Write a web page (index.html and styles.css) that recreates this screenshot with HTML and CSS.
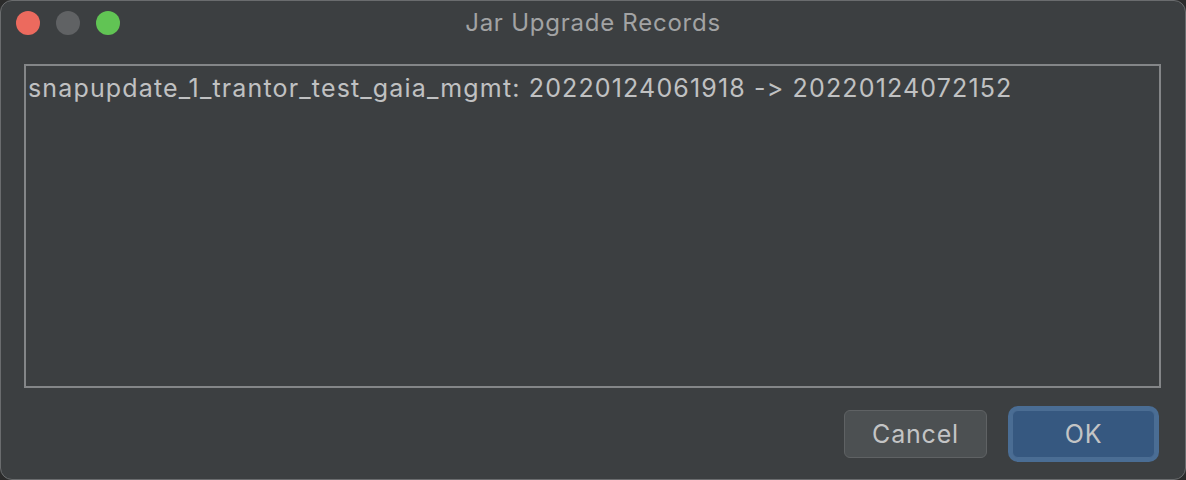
FILE: index.html
```html
<!DOCTYPE html>
<html>
<head>
<meta charset="utf-8">
<link rel="stylesheet" href="styles.css">
</head>
<body>
<div class="window">
  <div class="titlebar">
    <div class="lights">
      <span class="light red"></span>
      <span class="light grey"></span>
      <span class="light green"></span>
    </div>
    <div class="title">Jar Upgrade Records</div>
    <div class="spacer"></div>
  </div>
  <div class="content">
    <div class="records">snapupdate_1_trantor_test_gaia_mgmt: 20220124061918 -&gt; 20220124072152</div>
  </div>
  <div class="footer">
    <button class="btn cancel">Cancel</button>
    <button class="btn ok">OK</button>
  </div>
</div>
</body>
</html>
```

FILE: styles.css
```css
html, body {
  margin: 0;
  padding: 0;
  background: #2b2b2b;
}
body {
  width: 1186px;
  height: 480px;
  overflow: hidden;
  font-family: Inter, "Noto Sans", "Liberation Sans", sans-serif;
  font-variant-ligatures: none;
  font-feature-settings: "calt" 0, "liga" 0;
}
.window {
  box-sizing: border-box;
  width: 1186px;
  height: 480px;
  background: #3c3f41;
  border: 1px solid #6a6c6e;
  border-radius: 12px;
  display: flex;
  flex-direction: column;
  overflow: hidden;
}
.titlebar {
  height: 43px;
  display: grid;
  grid-template-columns: 1fr auto 1fr;
  align-items: center;
}
.lights {
  display: flex;
  gap: 16px;
  padding-left: 15px;
}
.light {
  width: 24px;
  height: 24px;
  border-radius: 50%;
  display: block;
}
.red { background: #ec6a5e; }
.grey { background: #606264; }
.green { background: #61c454; }
.title {
  color: #a2a3a4;
  font-size: 24px;
  letter-spacing: 0.75px;
}
.content {
  padding: 20px 24px 0 23px;
}
.records {
  box-sizing: border-box;
  height: 324px;
  border: 2px solid #848688;
  color: #c0c1c2;
  font-size: 25px;
  line-height: 30px;
  letter-spacing: 1.15px;
  padding: 7px 2px;
  white-space: nowrap;
}
.footer {
  display: flex;
  justify-content: flex-end;
  align-items: center;
  gap: 25px;
  padding: 22px 30px 0 0;
}
.btn {
  font-family: inherit;
  font-variant-ligatures: none;
  font-size: 25px;
  letter-spacing: 0.8px;
  color: #c3c4c5;
  width: 143px;
  height: 48px;
  border-radius: 6px;
  padding: 0;
  cursor: default;
}
.cancel {
  background: #4c5052;
  border: 1px solid #5f6264;
}
.ok {
  background: #365880;
  border: 1px solid #4b6d93;
  box-shadow: 0 0 0 4px #4a6d94;
}
```
